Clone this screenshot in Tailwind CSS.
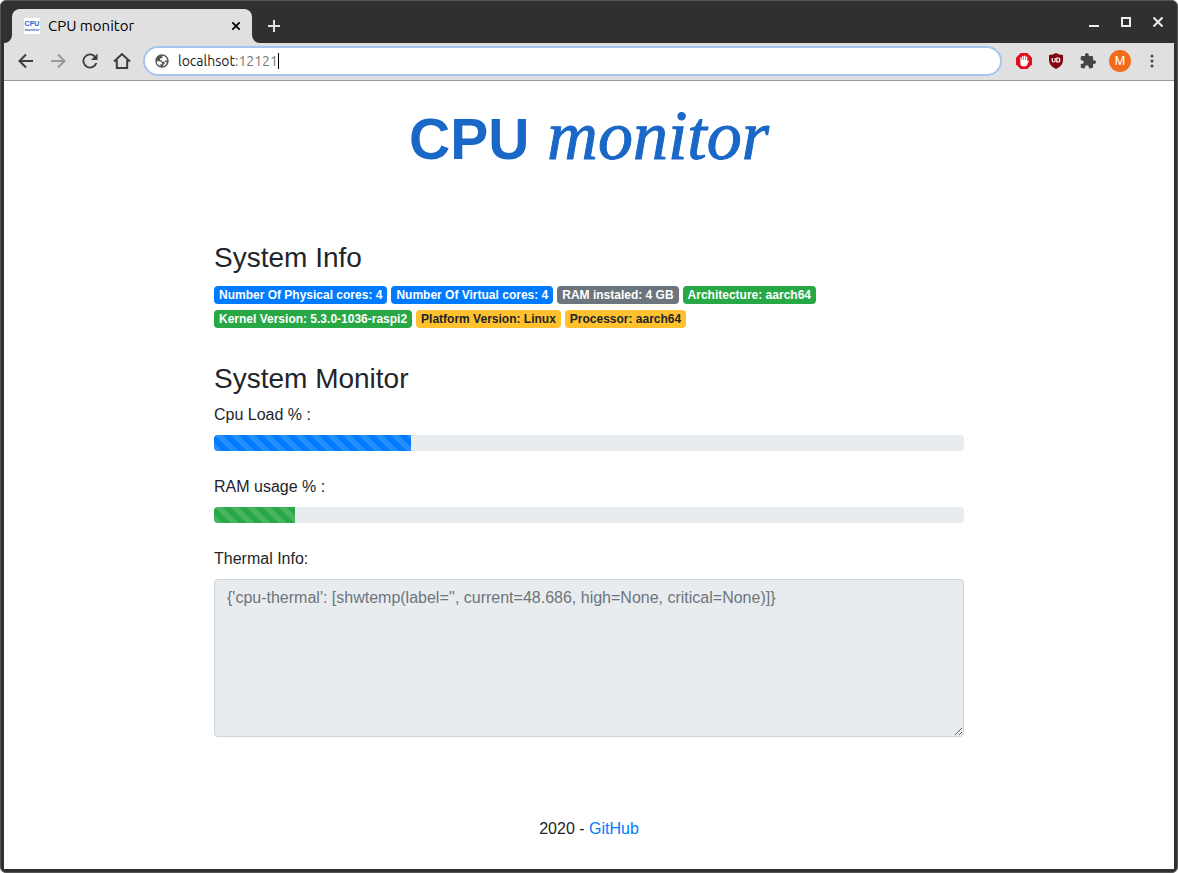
<!DOCTYPE html>
<html lang="en">
<head>
  <meta charset="UTF-8">
  <meta name="viewport" content="width=device-width, initial-scale=1.0">
  <title>CPU monitor</title>
  <script src="https://cdn.jsdelivr.net/npm/@tailwindcss/browser@4"></script>
</head>
<body class="bg-white">
<div class="min-h-screen flex flex-col bg-[#303030] border border-[#555553] rounded-md font-['Liberation_Sans',Arial,sans-serif] text-[#212529]">

  <!-- TITLE BAR -->
  <header class="flex items-end h-[42px] pl-[3px] pr-[11px] font-['Ubuntu','Noto_Sans',sans-serif]">
    <svg class="w-2 h-2 text-[#e0e0e0]" viewBox="0 0 8 8" fill="currentColor"><path d="M8 0v8H0a8 8 0 0 0 8-8z"/></svg>
    <div class="flex items-center h-[34px] w-[240px] pl-3 pr-2 bg-[#e0e0e0] rounded-t-lg">
      <svg class="w-4 h-4 shrink-0" viewBox="0 0 16 16">
        <rect width="16" height="16" fill="#fff"/>
        <text x="8" y="8" text-anchor="middle" font-family="Liberation Sans" font-weight="700" font-size="7" fill="#1967c6">CPU</text>
        <text x="8" y="13" text-anchor="middle" font-family="Liberation Sans" font-weight="700" font-size="4" fill="#1967c6">monitor</text>
      </svg>
      <span class="ml-2 flex-1 text-[15px] leading-5 text-black">CPU monitor</span>
      <button type="button" aria-label="Close tab" class="w-4 h-4 text-black">
        <svg class="w-4 h-4" viewBox="0 0 16 16" fill="none" stroke="currentColor" stroke-width="1.700"><path d="M4.300 4.300l7.400 7.400M11.700 4.300l-7.400 7.400"/></svg>
      </button>
    </div>
    <svg class="w-2 h-2 text-[#e0e0e0]" viewBox="0 0 8 8" fill="currentColor"><path d="M0 0v8h8a8 8 0 0 1-8-8z"/></svg>
    <button type="button" aria-label="New tab" class="ml-1 mb-[7px] w-5 h-5 text-[#e4e4e4]">
      <svg class="w-5 h-5" viewBox="0 0 20 20" fill="none" stroke="currentColor" stroke-width="2"><path d="M10 4v12M4 10h12"/></svg>
    </button>
    <div class="ml-auto mb-[13px] flex gap-4 text-[#eeeeec]">
      <button type="button" aria-label="Minimize" class="w-4 h-4">
        <svg class="w-4 h-4" viewBox="0 0 16 16" fill="currentColor"><path d="M3 11h10v2H3z"/></svg>
      </button>
      <button type="button" aria-label="Maximize" class="w-4 h-4">
        <svg class="w-4 h-4" viewBox="0 0 16 16" fill="none" stroke="currentColor" stroke-width="2"><path d="M4 4h8v8H4z"/></svg>
      </button>
      <button type="button" aria-label="Close" class="w-4 h-4">
        <svg class="w-4 h-4" viewBox="0 0 16 16" fill="none" stroke="currentColor" stroke-width="2"><path d="M3.500 3.500l9 9M12.500 3.500l-9 9"/></svg>
      </button>
    </div>
  </header>

  <div class="flex-1 flex flex-col mx-[3px] mb-[3px] bg-white">
    <!-- TOOLBAR -->
    <nav class="flex items-center h-[38px] pl-3 pr-[14px] pb-0.5 bg-[#e0e0e0] border-b border-[#999999] text-[#3c3c3c]">
      <div class="flex gap-3">
        <button type="button" aria-label="Back" class="w-5 h-5">
          <svg class="w-5 h-5" viewBox="0 0 20 20" fill="none" stroke="currentColor" stroke-width="2"><path d="M17 10H4M10 3.500L3.500 10l6.500 6.500"/></svg>
        </button>
        <button type="button" aria-label="Forward" class="w-5 h-5 text-[#999999]">
          <svg class="w-5 h-5" viewBox="0 0 20 20" fill="none" stroke="currentColor" stroke-width="2"><path d="M3 10h13M10 3.500l6.500 6.500-6.500 6.500"/></svg>
        </button>
        <button type="button" aria-label="Reload" class="w-5 h-5">
          <svg class="w-5 h-5" viewBox="0 0 24 24" fill="currentColor"><path d="M18.400 5.600A9 9 0 1 0 20.700 14.300h-2.400A6.800 6.800 0 1 1 16.800 7.200L13.200 10.800H21V3z"/></svg>
        </button>
        <button type="button" aria-label="Home" class="w-5 h-5">
          <svg class="w-5 h-5" viewBox="0 0 20 20" fill="none" stroke="currentColor" stroke-width="2"><path d="M2 10.500L10 3l8 7.500M4.800 9v8h10.400V9"/></svg>
        </button>
      </div>
      <div class="flex-1 flex items-center h-[30px] ml-[11px] pl-[9px] bg-white border-2 border-[#a3c5ee] rounded-full">
        <svg class="w-4 h-4 text-[#555555]" viewBox="0 0 24 24" fill="currentColor"><path d="M12 2C6.480 2 2 6.480 2 12s4.480 10 10 10 10-4.480 10-10S17.520 2 12 2zM4 12.200h4.400q3.400 0 3.600 3.400v1.200H9.500v2.800Q4.500 17.500 4 12.200zm9.500 7.600v-1.600l2.500-2.400v-2.600h-3.800V11H9V9q0-1.200 1.200-1.200h2.300V5.200q0-.8.700-1.100 5.600 1 6.800 7h-4.200q.4 3.200 3.700 3.300-1.600 4.600-6 5.400z"/></svg>
        <div role="textbox" aria-label="Address" class="ml-2 text-sm leading-5 text-[#212121] font-['Ubuntu','Noto_Sans',sans-serif] flex items-center">localhsot<span class="text-[#777777]">:12121</span><span class="w-px h-4 bg-black"></span></div>
      </div>
      <div class="flex items-center gap-4 ml-[14px]">
        <button type="button" aria-label="Adblock" class="w-4 h-4">
          <svg class="w-4 h-4" viewBox="0 0 16 16"><path fill="#e40d1c" d="M4.700 0h6.600L16 4.700v6.600L11.300 16H4.700L0 11.300V4.700z"/><path fill="#fff" d="M4.300 8V4.600q.7-.8 1.300 0V7h.5V3.300q.7-.9 1.400 0V7H8V2.800q.8-.8 1.400 0V7h.5V3.800q.7-.8 1.400 0V8.500l.7-1q.9-.2.9.5l-2 4.200Q10 13.500 8 13.500 4.300 13.500 4.300 10z"/></svg>
        </button>
        <button type="button" aria-label="uBlock" class="w-4 h-4">
          <svg class="w-4 h-4" viewBox="0 0 16 16"><path fill="#800610" d="M8 0q3 2 7 2v5q0 6-7 9-7-3-7-9V2q4 0 7-2z"/><path fill="none" stroke="#fff" stroke-width="1.200" d="M4.200 5v2.500q0 1.500 1.500 1.500t1.500-1.500V5M8.800 5v4h1.200q1.800 0 1.800-2t-1.800-2z"/></svg>
        </button>
        <button type="button" aria-label="Extensions" class="w-4 h-4 text-[#454545]">
          <svg class="w-4 h-4" viewBox="1 1 22 22" fill="currentColor"><path d="M20.500 11H19V7c0-1.100-.9-2-2-2h-4V3.500C13 2.120 11.880 1 10.500 1S8 2.120 8 3.500V5H4c-1.100 0-1.990.9-1.990 2v3.800H3.500c1.490 0 2.700 1.210 2.700 2.700s-1.210 2.700-2.700 2.700H2V20c0 1.100.9 2 2 2h3.800v-1.500c0-1.490 1.210-2.700 2.700-2.700s2.700 1.210 2.700 2.700V22H17c1.100 0 2-.9 2-2v-4h1.500c1.380 0 2.500-1.120 2.500-2.500S21.880 11 20.500 11z"/></svg>
        </button>
        <button type="button" aria-label="Profile" class="-mx-[3px] w-[22px] h-[22px] rounded-full bg-[#f26b1d] text-white text-xs leading-[22px] text-center font-['Roboto',sans-serif]">M</button>
        <button type="button" aria-label="Menu" class="w-4 h-4 text-[#454545]">
          <svg class="w-4 h-4" viewBox="0 0 16 16" fill="currentColor"><circle cx="8" cy="3" r="1.500"/><circle cx="8" cy="8" r="1.500"/><circle cx="8" cy="13" r="1.500"/></svg>
        </button>
      </div>
    </nav>

    <!-- PAGE -->
    <main class="w-full max-w-[750px] mx-auto pt-[23px]">
      <h1 class="flex items-baseline justify-center gap-[18px] text-[#1967c6]">
        <span class="text-[57px] leading-16 font-bold">CPU</span>
        <span class="text-[70px] leading-16 italic font-['Liberation_Serif',serif] [-webkit-text-stroke:1px]">monitor</span>
      </h1>

      <section class="mt-[70px]">
        <h2 class="text-[28px] leading-[34px]">System Info</h2>
        <div class="mt-[11px] flex flex-wrap gap-x-1 gap-y-1.5 text-xs leading-3 font-bold text-white">
          <span class="px-[5px] py-[3px] rounded-sm bg-[#007bff]">Number Of Physical cores: 4</span>
          <span class="px-[5px] py-[3px] rounded-sm bg-[#007bff]">Number Of Virtual cores: 4</span>
          <span class="px-[5px] py-[3px] rounded-sm bg-[#6c757d]">RAM instaled: 4 GB</span>
          <span class="px-[5px] py-[3px] rounded-sm bg-[#28a745]">Architecture: aarch64</span>
          <span class="px-[5px] py-[3px] rounded-sm bg-[#28a745]">Kernel Version: 5.3.0-1036-raspi2</span>
          <span class="px-[5px] py-[3px] rounded-sm bg-[#ffc12e] text-[#212529]">Platform Version: Linux</span>
          <span class="px-[5px] py-[3px] rounded-sm bg-[#ffc12e] text-[#212529]">Processor: aarch64</span>
        </div>
      </section>

      <section class="mt-[34px]">
        <h2 class="text-[28px] leading-[34px]">System Monitor</h2>
        <div class="mt-[7px]">
          <p id="cpu" class="leading-6">Cpu Load % :</p>
          <div role="progressbar" aria-labelledby="cpu" aria-valuenow="26.3" class="mt-2 h-4 rounded-sm bg-[#e9ecef] overflow-hidden">
            <div class="h-4 bg-[#007bff] bg-[linear-gradient(45deg,#ffffff26_25%,transparent_25%,transparent_50%,#ffffff26_50%,#ffffff26_75%,transparent_75%,transparent)] bg-[length:16px_16px]" style="width:26.3%"></div>
          </div>
        </div>
        <div class="mt-6">
          <p id="ram" class="leading-6">RAM usage % :</p>
          <div role="progressbar" aria-labelledby="ram" aria-valuenow="10.8" class="mt-2 h-4 rounded-sm bg-[#e9ecef] overflow-hidden">
            <div class="h-4 bg-[#28a745] bg-[linear-gradient(45deg,#ffffff26_25%,transparent_25%,transparent_50%,#ffffff26_50%,#ffffff26_75%,transparent_75%,transparent)] bg-[length:16px_16px]" style="width:10.8%"></div>
          </div>
        </div>
        <div class="mt-6">
          <label for="thermal" class="block leading-6">Thermal Info:</label>
          <textarea id="thermal" rows="6" readonly class="mt-2 block w-full px-3 py-1.5 leading-6 text-[#6c757d] bg-[#e9ecef] border border-[#ced4da] rounded-sm resize">{'cpu-thermal': [shwtemp(label='', current=48.686, high=None, critical=None)]}</textarea>
        </div>
      </section>
    </main>

    <footer class="mt-20 text-center leading-6">2020 - <a href="#" class="text-[#007bff]">GitHub</a></footer>
  </div>
</div>
</body>
</html>
